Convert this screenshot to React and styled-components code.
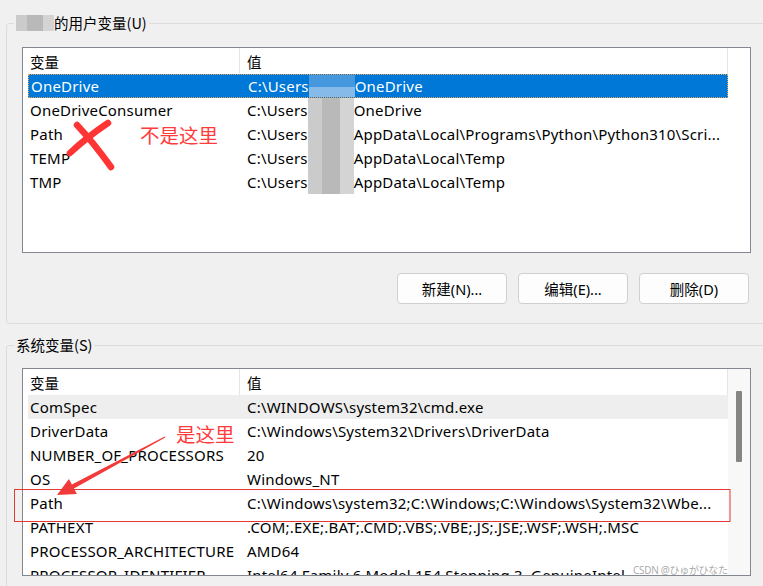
import React from "react";
import styled, { createGlobalStyle } from "styled-components";

const GlobalStyle = createGlobalStyle`
  html, body {
    margin: 0;
    padding: 0;
    background: #f0f0f0;
  }
  body {
    font-family: "Noto Sans", "Noto Sans CJK SC", sans-serif;
    color: #000;
  }
`;

const Page = styled.div`
  position: relative;
  width: 763px;
  height: 586px;
  overflow: hidden;
  box-sizing: border-box;
  padding: 13px 0 0 6px;
  background: #f0f0f0;
`;

const Group = styled.fieldset`
  margin: ${({ $top }) => $top}px 0 0 0;
  padding: 0 0 ${({ $bottom }) => $bottom}px 0;
  border: 1px solid #dcdcdc;
  border-radius: 3px;
  width: 800px;
  min-width: 0;
  box-sizing: border-box;
`;

const Legend = styled.legend`
  margin-left: 7px;
  padding: 0 2px;
  font-family: "Noto Sans CJK SC", sans-serif;
  font-size: 14.5px;
  line-height: 20px;
  display: flex;
  align-items: center;
`;

const Mosaic = styled.span`
  display: inline-block;
  flex: none;
  width: ${({ $w }) => $w}px;
  height: ${({ $h }) => $h}px;
  vertical-align: middle;
  background: ${({ $blue }) =>
    $blue
      ? "linear-gradient(180deg, #4597de 0 55%, #86bbe9 55%)"
      : "linear-gradient(90deg, #cbcbcb 0 30%, #b9b9b9 30% 70%, #d4d4d4 70%)"};
`;

const ListBox = styled.div`
  margin: ${({ $top }) => $top}px 0 0 15px;
  width: 729px;
  height: ${({ $height }) => $height}px;
  border: 1px solid #828790;
  background: #fff;
  box-sizing: border-box;
  display: flex;
  overflow: hidden;
`;

const ListBody = styled.div`
  flex: 1;
  padding-left: 5px;
  overflow: hidden;
`;

const Track = styled.div`
  width: 22px;
  background: ${({ $bar }) => ($bar ? "#f8f8f8" : "#fff")};
  display: flex;
  justify-content: center;
  padding-top: 22px;
  box-sizing: border-box;
`;

const Thumb = styled.div`
  width: 6px;
  height: 71px;
  background: #858585;
  border-radius: 1px;
`;

const Header = styled.div`
  display: grid;
  grid-template-columns: 212px 488px;
  height: 26px;
  font-family: "Noto Sans CJK SC", sans-serif;
  font-size: 14.5px;
`;

const HeadCell = styled.div`
  display: flex;
  align-items: center;
  padding-left: ${({ $pad }) => $pad}px;
  border-right: 1px solid #e5e5e5;
`;

const Row = styled.div`
  display: grid;
  grid-template-columns: 212px 488px;
  height: 24px;
  box-sizing: border-box;
  font-size: 15px;
  letter-spacing: 0.2px;
  background: ${({ $state }) =>
    $state === "selected" ? "#0078d7" : $state === "hover" ? "#eeeeee" : "transparent"};
  color: ${({ $state }) => ($state === "selected" ? "#fff" : "#000")};
  border: ${({ $state }) => ($state === "selected" ? "1px dotted #e6a15a" : "none")};
`;

const Cell = styled.div`
  display: flex;
  align-items: center;
  padding-left: ${({ $pad }) => $pad}px;
  white-space: nowrap;
  overflow: hidden;
  text-overflow: ellipsis;
`;

const ButtonBar = styled.div`
  display: flex;
  justify-content: flex-end;
  gap: 11px;
  margin: 20px 0 0 15px;
  width: 727px;
`;

const Button = styled.button`
  width: 110px;
  height: 31px;
  border: 1px solid #d0d0d0;
  border-radius: 4px;
  background: #fdfdfd;
  font-family: "Noto Sans", "Noto Sans CJK SC", sans-serif;
  font-size: 14.5px;
  color: #000;
  padding: 0;
`;

const Note = styled.div`
  position: absolute;
  left: ${({ $x }) => $x}px;
  top: ${({ $y }) => $y}px;
  color: #ff3b3b;
  font-family: "Noto Sans CJK SC", sans-serif;
  font-size: 19.5px;
  line-height: 20px;
  white-space: nowrap;
`;

const Watermark = styled.div`
  position: absolute;
  left: 633px;
  top: 563px;
  font-family: "Noto Sans", "Noto Sans CJK JP", sans-serif;
  font-size: 10px;
  letter-spacing: -0.3px;
  line-height: 14px;
  color: rgba(140, 140, 140, 0.75);
  white-space: nowrap;
`;

const Marks = styled.svg`
  position: absolute;
  left: 0;
  top: 0;
  pointer-events: none;
`;

const userVars = [
  { name: "OneDrive", tail: "OneDrive", state: "selected" },
  { name: "OneDriveConsumer", tail: "OneDrive" },
  { name: "Path", tail: "AppData\\Local\\Programs\\Python\\Python310\\Scri..." },
  { name: "TEMP", tail: "AppData\\Local\\Temp" },
  { name: "TMP", tail: "AppData\\Local\\Temp" },
];

const systemVars = [
  { name: "ComSpec", value: "C:\\WINDOWS\\system32\\cmd.exe", state: "hover" },
  { name: "DriverData", value: "C:\\Windows\\System32\\Drivers\\DriverData" },
  { name: "NUMBER_OF_PROCESSORS", value: "20" },
  { name: "OS", value: "Windows_NT" },
  { name: "Path", value: "C:\\Windows\\system32;C:\\Windows;C:\\Windows\\System32\\Wbe..." },
  { name: "PATHEXT", value: ".COM;.EXE;.BAT;.CMD;.VBS;.VBE;.JS;.JSE;.WSF;.WSH;.MSC" },
  { name: "PROCESSOR_ARCHITECTURE", value: "AMD64" },
  { name: "PROCESSOR_IDENTIFIER", value: "Intel64 Family 6 Model 154 Stepping 3, GenuineIntel" },
];

const ListHeader = () => (
  <Header>
    <HeadCell $pad={2}>变量</HeadCell>
    <HeadCell $pad={7}>值</HeadCell>
  </Header>
);

const App = () => {
  return (
    <Page>
      <GlobalStyle />
      <Group $top={0} $bottom={19}>
        <Legend>
          <Mosaic $w={38} $h={16} />
          的用户变量(U)
        </Legend>
        <ListBox $top={14} $height={206}>
          <ListBody>
            <ListHeader />
            {userVars.map((v) => (
              <Row key={v.name} $state={v.state}>
                <Cell $pad={2}>{v.name}</Cell>
                <Cell $pad={7}>
                  C:\Users
                  <Mosaic $w={46} $h={24} $blue={v.state === "selected"} />
                  {v.tail}
                </Cell>
              </Row>
            ))}
          </ListBody>
          <Track />
        </ListBox>
        <ButtonBar>
          <Button>新建(N)...</Button>
          <Button>编辑(E)...</Button>
          <Button>删除(D)</Button>
        </ButtonBar>
      </Group>

      <Group $top={11} $bottom={40}>
        <Legend>系统变量(S)</Legend>
        <ListBox $top={13} $height={208}>
          <ListBody>
            <ListHeader />
            {systemVars.map((v) => (
              <Row key={v.name} $state={v.state}>
                <Cell $pad={2}>{v.name}</Cell>
                <Cell $pad={7}>{v.value}</Cell>
              </Row>
            ))}
          </ListBody>
          <Track $bar>
            <Thumb />
          </Track>
        </ListBox>
      </Group>

      <Note $x={140} $y={125}>不是这里</Note>
      <Note $x={176} $y={424}>是这里</Note>
      <Watermark>CSDN @ひゅがひなた</Watermark>

      <Marks width="763" height="586" viewBox="0 0 763 586">
        <g fill="none" stroke="#ff3535" strokeWidth="6.5" strokeLinecap="round">
          <path d="M77 125 Q93 142 111 167" />
          <path d="M108 123 Q87 137 70 153" />
        </g>
        <polygon
          fill="#f23a3a"
          points="164.7,436.5 71.9,484.6 68.9,479 57,495 76.9,494 73.9,488.4 165.3,437.5"
        />
        <rect x="14.5" y="489.5" width="715.5" height="32" fill="none" stroke="#e53935" strokeWidth="1" />
      </Marks>
    </Page>
  );
};

export default App;
